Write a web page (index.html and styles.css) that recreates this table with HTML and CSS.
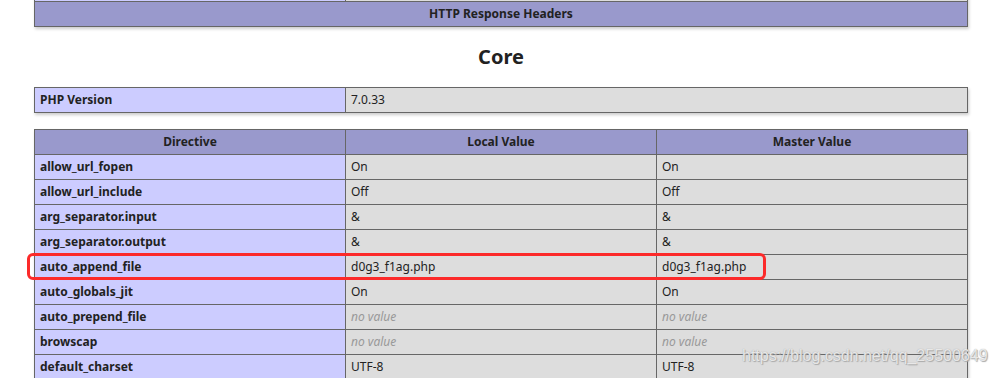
FILE: index.html
```html
<!DOCTYPE html>
<html>
<head>
<meta charset="utf-8">
<title>phpinfo()</title>
<link rel="stylesheet" href="styles.css">
</head>
<body>
<div class="center">
  <table class="first">
    <tr class="prev"><td class="e"></td><td class="v"></td></tr>
    <tr><th colspan="2" class="h">HTTP Response Headers</th></tr>
  </table>

  <h2>Core</h2>

  <table>
    <tr><td class="e">PHP Version </td><td class="v">7.0.33 </td></tr>
  </table>

  <table>
    <tr class="h"><th>Directive</th><th>Local Value</th><th>Master Value</th></tr>
    <tr><td class="e">allow_url_fopen</td><td class="v">On</td><td class="v">On</td></tr>
    <tr><td class="e">allow_url_include</td><td class="v">Off</td><td class="v">Off</td></tr>
    <tr><td class="e">arg_separator.input</td><td class="v">&amp;</td><td class="v">&amp;</td></tr>
    <tr><td class="e">arg_separator.output</td><td class="v">&amp;</td><td class="v">&amp;</td></tr>
    <tr><td class="e">auto_append_file</td><td class="v">d0g3_f1ag.php</td><td class="v">d0g3_f1ag.php</td></tr>
    <tr><td class="e">auto_globals_jit</td><td class="v">On</td><td class="v">On</td></tr>
    <tr><td class="e">auto_prepend_file</td><td class="v"><i>no value</i></td><td class="v"><i>no value</i></td></tr>
    <tr><td class="e">browscap</td><td class="v"><i>no value</i></td><td class="v"><i>no value</i></td></tr>
    <tr><td class="e">default_charset</td><td class="v">UTF-8</td><td class="v">UTF-8</td></tr>
  </table>
</div>
<div class="highlight"></div>
<div class="watermark">https://blog.csdn.net/qq_25500649</div>
</body>
</html>
```

FILE: styles.css
```css
html, body {
  margin: 0;
  padding: 0;
  background: #fff;
  color: #222;
  font-family: "Noto Sans", "Open Sans", sans-serif;
  overflow: hidden;
}

.center {
  padding-left: 34px;
  margin-top: -23px;
}

table {
  border-collapse: collapse;
  border: 0;
  width: 934px;
  box-shadow: 1px 2px 3px #ccc;
  margin: 0;
  text-align: left;
}

td, th {
  border: 1px solid #666;
  font-size: 12px;
  line-height: 16px;
  height: 16px;
  vertical-align: middle;
  padding: 4px 5px;
}

th {
  text-align: center;
}

.prev td {
  height: 15px;
}

.h {
  background-color: #99c;
  font-weight: bold;
}

.e {
  background-color: #ccf;
  width: 300px;
  font-weight: bold;
}

.v {
  background-color: #ddd;
  max-width: 300px;
}

.v i {
  color: #999;
}

h2 {
  font-size: 20px;
  line-height: 26px;
  font-weight: bold;
  text-align: center;
  width: 934px;
  margin: 17px 0 17px 0;
}

table + table {
  margin-top: 16px;
}

.highlight {
  position: absolute;
  left: 27px;
  top: 253px;
  width: 733px;
  height: 21px;
  border: 3px solid #fc2a2a;
  border-radius: 6px;
}

.watermark {
  position: absolute;
  left: 742px;
  top: 347px;
  font-family: "Liberation Sans", Arial, sans-serif;
  font-size: 16px;
  color: rgba(255, 255, 255, 0.75);
  text-shadow: 0 0 1px #999, 1px 1px 1px #aaa;
  white-space: nowrap;
}
```
